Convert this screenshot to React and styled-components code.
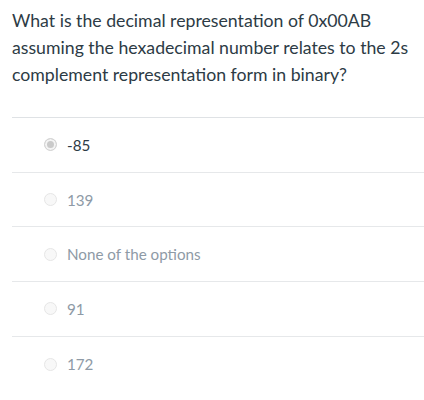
import React from 'react';
import styled, { createGlobalStyle } from 'styled-components';

const GlobalStyle = createGlobalStyle`
  body {
    margin: 0;
    background: #ffffff;
    font-family: Lato, "Open Sans", sans-serif;
  }
`;

const QuizContainer = styled.div`
  width: 424px;
  padding-left: 12px;
  box-sizing: border-box;
`;

const QuestionText = styled.div`
  color: #2d3b45;
  font-size: 17.7px;
  line-height: 27px;
  padding-top: 7px;
  padding-bottom: 29px;
  border-bottom: 1px solid #dfe2e5;
`;

const AnswerList = styled.div`
  display: flex;
  flex-direction: column;
`;

const AnswerRow = styled.label`
  display: flex;
  align-items: center;
  gap: 10px;
  height: 54.7px;
  box-sizing: border-box;
  padding-left: 32px;
  border-bottom: ${(p) => (p.last ? 'none' : '1px solid #e6e8ea')};
  font-size: 15.2px;
  color: ${(p) => (p.selected ? '#2d3b45' : '#8e9aa6')};
`;

const RadioDot = styled.span`
  width: 13px;
  height: 13px;
  border-radius: 50%;
  box-sizing: border-box;
  flex-shrink: 0;
  border: 1px solid ${(p) => (p.selected ? '#d4d4d4' : '#e6e6e6')};
  background: ${(p) => (p.selected ? '#cacaca' : '#f8f8f8')};
  box-shadow: ${(p) => (p.selected ? 'inset 0 0 0 2px #f4f4f4' : 'none')};
`;

const answers = [
  { id: 1, text: '-85', selected: true },
  { id: 2, text: '139' },
  { id: 3, text: 'None of the options' },
  { id: 4, text: '91' },
  { id: 5, text: '172' },
];

const App = () => {
  return (
    <>
      <GlobalStyle />
      <QuizContainer>
        <QuestionText>
          What is the decimal representation of 0x00AB assuming the hexadecimal number relates to the 2s complement representation form in binary?
        </QuestionText>
        <AnswerList>
          {answers.map((a, i) => (
            <AnswerRow key={a.id} selected={a.selected} last={i === answers.length - 1}>
              <RadioDot selected={a.selected} />
              {a.text}
            </AnswerRow>
          ))}
        </AnswerList>
      </QuizContainer>
    </>
  );
};

export default App;
